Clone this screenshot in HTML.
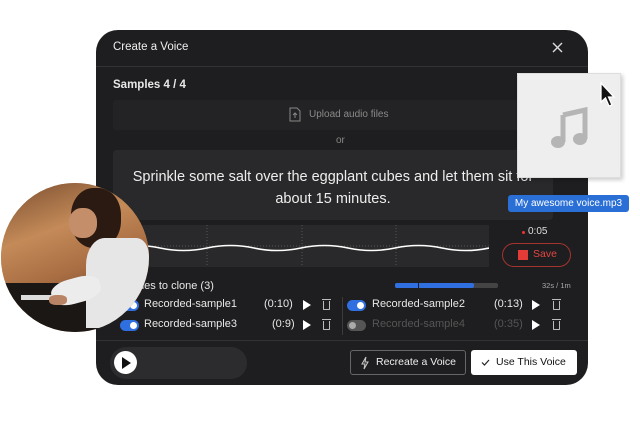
<!DOCTYPE html>
<html><head><meta charset="utf-8"><style>
*{margin:0;padding:0;box-sizing:border-box}
body{width:640px;height:427px;background:#fff;position:relative;overflow:hidden;font-family:"Liberation Sans",sans-serif;color:#eee}
.a{position:absolute}
#m{left:96px;top:30px;width:492px;height:355px;background:#1e1e20;border-radius:22px;overflow:hidden}
.t{font-size:11px;color:#e8e8e8}
.tg{width:19px;height:11px;border-radius:6px;background:#2f6fe0}
.tg::after{content:"";position:absolute;right:2px;top:2px;width:7px;height:7px;border-radius:50%;background:#fff}
.tg.off{background:#555}
.tg.off::after{left:2px;right:auto;background:#aaa}
.pl{width:0;height:0;border-left:8px solid #fff;border-top:5px solid transparent;border-bottom:5px solid transparent}
.tr{width:7px;height:9px;border:1.2px solid #bbb;border-top:none;border-radius:0 0 1px 1px}
.tr::before{content:"";position:absolute;left:-2px;top:-2px;width:9px;height:1px;background:#bbb}
</style></head><body>
<div id="m" class="a">
 <div class="a" style="left:17px;top:11px;font-size:11.5px;color:#eee">Create a Voice</div>
 <svg class="a" style="left:456px;top:12px" width="11" height="11"><path d="M1 1L10 10M10 1L1 10" stroke="#ddd" stroke-width="1.4"/></svg>
 <div class="a" style="left:0;top:36px;width:492px;height:1px;background:#333"></div>
 <div class="a" style="left:17px;top:49px;font-size:11.5px;font-weight:bold;color:#e8e8e8">Samples 4 / 4</div>
 <div class="a" style="left:17px;top:70px;width:440px;height:30px;background:#232325;border-radius:3px"></div>
 <svg class="a" style="left:193px;top:77px" width="12" height="15"><path d="M1 1h7l3 3v10H1z" fill="none" stroke="#888" stroke-width="1"/><path d="M6 11V6M4 8l2-2 2 2" fill="none" stroke="#888"/></svg>
 <div class="a" style="left:213px;top:79px;font-size:10px;color:#8a8a8a">Upload audio files</div>
 <div class="a" style="left:240px;top:105px;font-size:10px;color:#888">or</div>
 <div class="a" style="left:17px;top:120px;width:440px;height:70px;background:#29292b;border-radius:4px"></div>
 <div class="a" style="left:17px;top:136px;width:440px;text-align:center;font-size:14.5px;line-height:22px;color:#eee">Sprinkle some salt over the eggplant cubes and let them sit for about 15 minutes.</div>
 <div class="a" style="left:17px;top:195px;width:376px;height:42px;background:#29292b"></div>
 <svg class="a" style="left:17px;top:195px" width="376" height="42"><g stroke="#555" stroke-dasharray="1 2"><path d="M94 0v42M189 0v42M283 0v42"/><path d="M0 21h376"/></g><path d="M0 23 q23.5 -5 47 0 t47 0 t47 0 t47 0 t47 0 t47 0 t47 0 t47 0" fill="none" stroke="#fff" stroke-width="1.6"/></svg>
 <div class="a" style="left:426px;top:201px;width:3px;height:3px;border-radius:50%;background:#e33"></div>
 <div class="a" style="left:432px;top:196px;font-size:10px;color:#ddd">0:05</div>
 <div class="a" style="left:406px;top:213px;width:69px;height:24px;border:1px solid #a3342e;border-radius:12px"></div>
 <div class="a" style="left:422px;top:220px;width:10px;height:10px;background:#e33b36"></div>
 <div class="a" style="left:437px;top:218px;font-size:10.5px;color:#e34540">Save</div>
 <div class="a t" style="left:17px;top:250px">Samples to clone (3)</div>
 <div class="a" style="left:299px;top:253px;width:103px;height:5px;background:#444;border-radius:2px"></div>
 <div class="a" style="left:299px;top:253px;width:79px;height:5px;background:#2f6fe0;border-radius:2px"></div>
 <div class="a" style="left:322px;top:253px;width:1px;height:5px;background:#1e1e20"></div>
 <div class="a" style="left:446px;top:251px;font-size:7.5px;color:#aaa">32s / 1m</div>
 <div class="a" style="left:246px;top:267px;width:1px;height:38px;background:#3a3a3a"></div>
 <div class="a tg" style="left:24px;top:270px"></div><div class="a t" style="left:48px;top:268px">Recorded-sample1</div><div class="a t" style="left:168px;top:268px">(0:10)</div><div class="a pl" style="left:207px;top:270px"></div><div class="a tr" style="left:227px;top:271px"></div>
 <div class="a tg" style="left:24px;top:290px"></div><div class="a t" style="left:48px;top:288px">Recorded-sample3</div><div class="a t" style="left:176px;top:288px">(0:9)</div><div class="a pl" style="left:207px;top:290px"></div><div class="a tr" style="left:227px;top:291px"></div>
 <div class="a tg" style="left:251px;top:270px"></div><div class="a t" style="left:276px;top:268px">Recorded-sample2</div><div class="a t" style="left:398px;top:268px">(0:13)</div><div class="a pl" style="left:436px;top:270px"></div><div class="a tr" style="left:457px;top:271px"></div>
 <div class="a tg off" style="left:251px;top:290px"></div><div class="a t" style="left:276px;top:288px;color:#555">Recorded-sample4</div><div class="a t" style="left:398px;top:288px;color:#555">(0:35)</div><div class="a pl" style="left:436px;top:290px"></div><div class="a tr" style="left:457px;top:291px"></div>
 <div class="a" style="left:0;top:310px;width:492px;height:1px;background:#333"></div>
 <div class="a" style="left:14px;top:317px;width:137px;height:32px;background:#2c2c2e;border-radius:16px"></div>
 <div class="a" style="left:18px;top:321px;width:23px;height:23px;background:#fff;border-radius:50%"></div>
 <div class="a pl" style="left:26px;top:327px;border-left-width:9px;border-top-width:6px;border-bottom-width:6px;border-left-color:#111"></div>
 <div class="a" style="left:254px;top:320px;width:116px;height:25px;border:1px solid #666;border-radius:3px;background:#1e1e20"></div>
 <svg class="a" style="left:264px;top:326px" width="10" height="14"><path d="M6 1L2 8h3l-1 5 4-7H5z" fill="none" stroke="#ccc" stroke-width="1"/></svg>
 <div class="a" style="left:280px;top:326px;font-size:10.5px;color:#eee">Recreate a Voice</div>
 <div class="a" style="left:375px;top:320px;width:106px;height:25px;background:#fff;border-radius:3px"></div>
 <svg class="a" style="left:385px;top:329px" width="9" height="7"><path d="M1 3.5l2.5 2.5L8 1" fill="none" stroke="#222" stroke-width="1.2"/></svg>
 <div class="a" style="left:400px;top:326px;font-size:10.5px;color:#111">Use This Voice</div>
</div>
<div class="a" style="left:1px;top:183px;width:148px;height:149px;border-radius:50%;overflow:hidden;background:#b07a4f">
 <div class="a" style="left:0;top:0;width:148px;height:110px;background:linear-gradient(160deg,#7a4e30,#c48a58 40%,#a86d42 70%,#6b4228)"></div>
 <div class="a" style="left:0;top:100px;width:100px;height:50px;background:#1a1715"></div>
 <div class="a" style="left:20px;top:112px;width:80px;height:5px;background:#ddd"></div>
 <div class="a" style="left:70px;top:5px;width:50px;height:60px;border-radius:45%;background:#2b1a12"></div>
 <div class="a" style="left:68px;top:25px;width:28px;height:30px;border-radius:45%;background:#c58e6b"></div>
 <div class="a" style="left:85px;top:55px;width:63px;height:90px;border-radius:30% 20% 0 0;background:#e6e6e6"></div>
 <div class="a" style="left:50px;top:95px;width:50px;height:25px;border-radius:40%;background:#ececec;transform:rotate(-15deg)"></div>
 <div class="a" style="left:48px;top:112px;width:18px;height:10px;border-radius:40%;background:#b98465"></div>
</div>
<div class="a" style="left:517px;top:73px;width:104px;height:105px;background:#eeeeee;border:1px solid #ddd;box-shadow:2px 2px 4px rgba(0,0,0,.2)"></div>
<svg class="a" style="left:550px;top:107px" width="40" height="42"><path d="M13 8L35 3V32" fill="none" stroke="#b5b5b5" stroke-width="5"/><path d="M13 8V35" stroke="#b5b5b5" stroke-width="5"/><ellipse cx="8" cy="35" rx="7" ry="6" fill="#b5b5b5"/><ellipse cx="30" cy="32" rx="7" ry="6" fill="#b5b5b5"/></svg>
<svg class="a" style="left:599px;top:82px" width="18" height="26"><path d="M2 1V20L6.5 16L10 24L13 23L9.5 15H15Z" fill="#111" stroke="#fff" stroke-width="1.3"/></svg>
<div class="a" style="left:508px;top:195px;width:121px;height:17px;background:#2a6fd6;border-radius:3px;font-size:10px;color:#fff;line-height:17px;text-align:center">My awesome voice.mp3</div>
</body></html>
